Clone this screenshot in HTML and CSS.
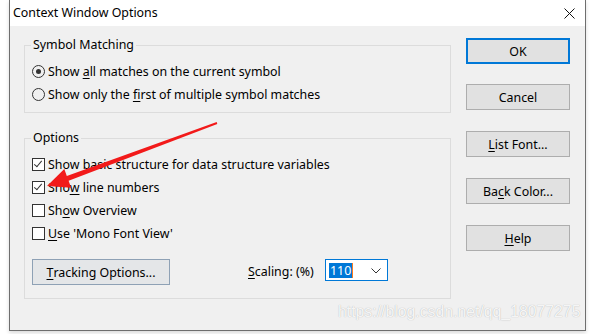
FILE: index.html
```html
<!DOCTYPE html>
<html>
<head>
<meta charset="utf-8">
<link rel="stylesheet" href="styles.css">
</head>
<body>
<div class="window">
  <div class="titlebar">
    <span class="title">Context Window Options</span>
    <svg class="close" width="11" height="11" viewBox="0 0 11 11"><path d="M0.5 0.5 L10.5 10.5 M10.5 0.5 L0.5 10.5" stroke="#111" stroke-width="1"/></svg>
  </div>
  <div class="client">
    <div class="left">
      <fieldset class="group g1">
        <legend>Symbol Matching</legend>
        <div class="row"><span class="radio on"></span><span>Show <u>a</u>ll matches on the current symbol</span></div>
        <div class="row"><span class="radio"></span><span>Show only the <u>f</u>irst of multiple symbol matches</span></div>
      </fieldset>
      <fieldset class="group g2">
        <legend>Options</legend>
        <div class="row"><span class="check on"></span><span>Show basic structure for data structure variables</span></div>
        <div class="row"><span class="check on"></span><span>Sho<u>w</u> line numbers</span></div>
        <div class="row"><span class="check"></span><span>Sh<u>o</u>w Overview</span></div>
        <div class="row"><span class="check"></span><span><u>U</u>se 'Mono Font View'</span></div>
        <div class="bottomrow">
          <div class="btn track"><u>T</u>racking Options...</div>
          <span class="scal"><u>S</u>caling: (%)</span>
          <div class="combo">
            <span class="sel">110</span><span class="caret"></span>
            <svg class="chev" width="10" height="6" viewBox="0 0 10 6"><path d="M0.5 0.5 L5 5 L9.5 0.5" fill="none" stroke="#333" stroke-width="1"/></svg>
          </div>
        </div>
      </fieldset>
    </div>
    <div class="right">
      <div class="btn ok">OK</div>
      <div class="btn b2">Cancel</div>
      <div class="btn b3"><u>L</u>ist Font...</div>
      <div class="btn b3">Ba<u>c</u>k Color...</div>
      <div class="btn b3"><u>H</u>elp</div>
    </div>
  </div>
</div>
<div class="watermark">https://blog.csdn.net/qq_18077275</div>
<svg class="arrow" width="591" height="334" viewBox="0 0 591 334">
  <polygon points="47,186 64.3,169 66.8,176.1 216.7,122.1 217.3,123.9 68.6,180.7 71.1,187.8" fill="#f21a1a"/>
</svg>
</body>
</html>
```
FILE: styles.css
```css
html, body {
  margin: 0;
  padding: 0;
  background: #ffffff;
}
body {
  width: 591px;
  height: 334px;
  overflow: hidden;
  position: relative;
  font-family: "Noto Sans", "Open Sans", sans-serif;
  font-size: 12.4px;
  color: #000;
}
.window {
  margin-left: 9px;
  width: 575px;
  height: 330px;
  border: 1px solid #6e6e6e;
  border-top: none;
  background: #f0f0f0;
  box-shadow: 0 2px 4px rgba(0,0,0,0.15);
}
.titlebar {
  height: 26px;
  background: #ffffff;
  display: flex;
  align-items: center;
  justify-content: space-between;
  padding: 0 10px 0 3px;
}
.title {
  font-size: 12.4px;
  line-height: 18px;
}
.close { display: block; }
.client {
  display: flex;
}
.left {
  padding-left: 14px;
  width: 427px;
}
.group {
  margin: 0;
  border: 1px solid #dcdcdc;
  padding: 0 7px;
  box-sizing: border-box;
  width: 427px;
}
.group legend {
  padding: 0 2px;
  margin-left: -1px;
  line-height: 18px;
}
.g1 {
  margin-top: 10px;
  padding-top: 6px;
  padding-bottom: 6px;
}
.g2 {
  margin-top: 16px;
  padding-top: 6px;
  padding-bottom: 13px;
}
.row {
  height: 23px;
  display: flex;
  align-items: center;
  gap: 3px;
  white-space: nowrap;
}
.radio {
  width: 11px;
  height: 11px;
  border: 1px solid #333;
  border-radius: 50%;
  box-sizing: content-box;
  position: relative;
  flex: none;
}
.radio.on::after {
  content: "";
  position: absolute;
  left: 3px;
  top: 3px;
  width: 5px;
  height: 5px;
  border-radius: 50%;
  background: #333;
}
.check {
  width: 11px;
  height: 11px;
  border: 1px solid #333;
  background: #fff;
  position: relative;
  flex: none;
}
.check.on::after {
  content: "";
  position: absolute;
  left: 3px;
  top: 0px;
  width: 3px;
  height: 7px;
  border-right: 1px solid #333;
  border-bottom: 1px solid #333;
  transform: rotate(40deg);
}
.btn {
  box-sizing: border-box;
  height: 26px;
  border: 1px solid #adadad;
  background: #e1e1e1;
  display: flex;
  align-items: center;
  justify-content: center;
  white-space: nowrap;
}
.bottomrow {
  display: flex;
  align-items: flex-start;
  margin-top: 14px;
}
.track {
  width: 138px;
  border-color: #8ea1b5;
  background: #e4e6e8;
}
.scal {
  margin-left: 78px;
  margin-top: 4px;
  line-height: 18px;
  width: 69px;
}
.combo {
  margin-left: 8px;
  width: 63px;
  height: 22px;
  box-sizing: border-box;
  border: 1px solid #0078d7;
  background: #fff;
  position: relative;
  display: flex;
  align-items: center;
  padding-left: 3px;
}
.sel {
  background: #0078d7;
  color: #fff;
  line-height: 15px;
  height: 15px;
  padding: 0 1px;
}
.caret {
  width: 1px;
  height: 15px;
  background: #ff7b1c;
}
.chev {
  position: absolute;
  right: 6px;
  top: 8px;
}
.right {
  margin-left: 15px;
  width: 104px;
  display: flex;
  flex-direction: column;
}
.ok {
  margin-top: 12px;
  border: 2px solid #0078d7;
}
.b2 { margin-top: 20px; }
.b3 { margin-top: 21px; }
u { text-underline-offset: 2px; }
.watermark {
  position: absolute;
  left: 338px;
  top: 303px;
  font-family: "Liberation Sans", Arial, sans-serif;
  font-size: 15.8px;
  color: rgba(255,255,255,0.9);
  text-shadow: 0 0 1px rgba(0,0,0,0.3);
  white-space: nowrap;
}
.arrow {
  position: absolute;
  left: 0;
  top: 0;
}
```
